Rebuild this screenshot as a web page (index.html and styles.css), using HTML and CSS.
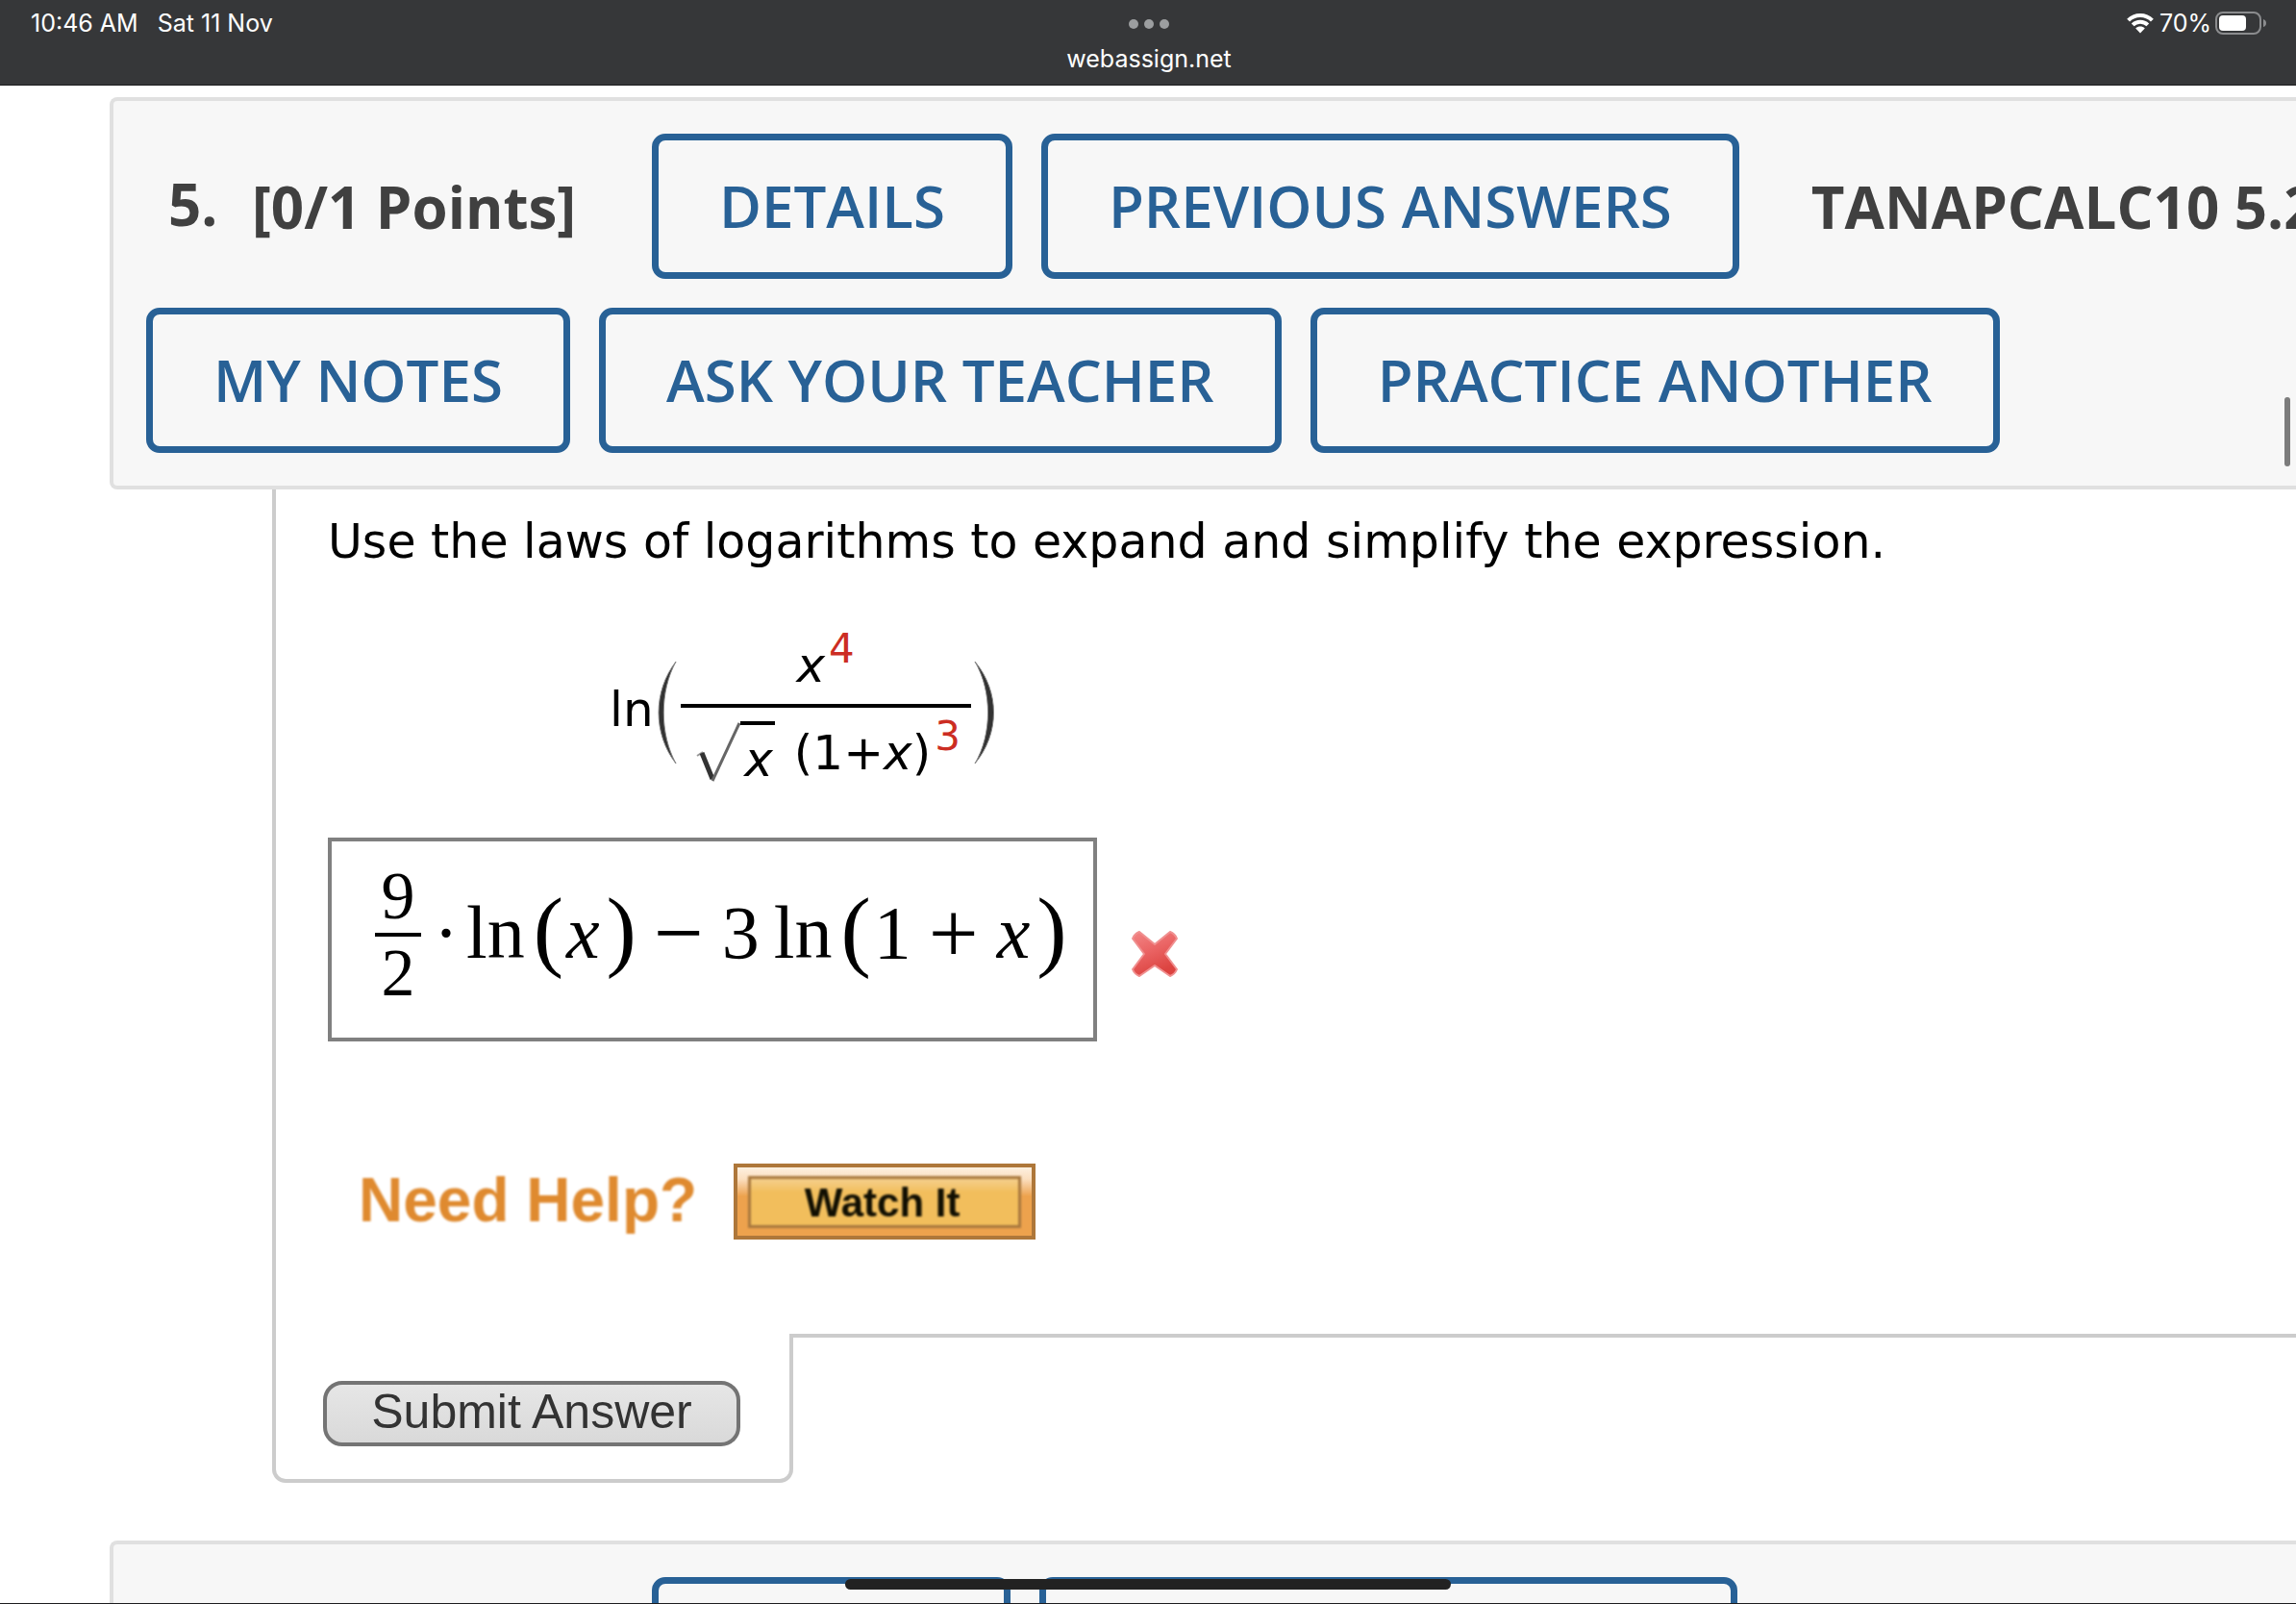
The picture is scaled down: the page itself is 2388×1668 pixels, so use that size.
FILE: index.html
```html
<!DOCTYPE html>
<html lang="en">
<head>
<meta charset="utf-8">
<meta name="viewport" content="width=device-width, initial-scale=1">
<title>webassign.net</title>
<link rel="stylesheet" href="styles.css">
</head>
<body>
<header class="status-bar">
  <div class="status-left"><span>10:46 AM</span><span>Sat 11 Nov</span></div>
  <div class="status-center">
    <div class="dots"><i></i><i></i><i></i></div>
    <div class="address">webassign.net</div>
  </div>
  <div class="status-right">
    <svg class="wifi" viewBox="0 0 28 22" width="28" height="22" aria-label="Wi-Fi">
      <g fill="none" stroke="#fff" stroke-width="4">
        <path d="M1.6 8.2C8.4 1.200 19.600 1.200 26.400 8.200"/>
        <path d="M6.200 12.900C10.500 8.700 17.500 8.700 21.800 12.900"/>
      </g>
      <path d="M9.200 16.400C12 13.900 16 13.900 18.800 16.400L14 21.400Z" fill="#fff"/>
    </svg>
    <span>70%</span>
    <svg class="battery" viewBox="0 0 54 24" width="54" height="24" aria-label="Battery">
      <rect x="1" y="1" width="46" height="22" rx="7" fill="none" stroke="#8b8c8e" stroke-width="2"/>
      <rect x="4" y="4" width="28" height="16" rx="4" fill="#fff"/>
      <path d="M50 8q3 1 3 4t-3 4z" fill="#8b8c8e"/>
    </svg>
  </div>
</header>

<main class="page">
  <section class="question">
    <div class="question-header">
      <div class="header-row">
        <h2 class="number">5.</h2>
        <span class="points">[0/1 Points]</span>
        <button class="action" type="button">DETAILS</button>
        <button class="action" type="button">PREVIOUS ANSWERS</button>
        <span class="source">TANAPCALC10 5.2</span>
      </div>
      <div class="header-row">
        <button class="action" type="button">MY NOTES</button>
        <button class="action" type="button">ASK YOUR TEACHER</button>
        <button class="action" type="button">PRACTICE ANOTHER</button>
      </div>
    </div>

    <div class="question-body">
      <p class="prompt">Use the laws of logarithms to expand and simplify the expression.</p>

      <div class="formula">
        <span class="fn">ln</span>
        <svg class="fence" viewBox="0 0 28 108" width="28" height="108" aria-hidden="true"><path d="M23 1C-1 32-1 76 23 107C6 76 6 32 23 1Z" fill="#333" stroke="#888" stroke-width="1"/></svg>
        <div class="frac">
          <div class="numerator"><i>x</i><sup>4</sup></div>
          <div class="denominator">
            <span class="radical">
              <svg viewBox="0 0 46 64" width="46" height="64" aria-hidden="true"><path d="M1 36L7 32" stroke="#999" stroke-width="2" fill="none"/><path d="M6 33L17 60" stroke="#333" stroke-width="5" fill="none"/><path d="M17 62L45 2" stroke="#666" stroke-width="3" fill="none"/></svg>
              <i class="radicand">x</i>
            </span>
            <span class="power">(1+<i>x</i>)<sup>3</sup></span>
          </div>
        </div>
        <svg class="fence" viewBox="0 0 28 108" width="28" height="108" aria-hidden="true"><path d="M4 1C30 32 30 76 4 107C22 76 22 32 4 1Z" fill="#333" stroke="#888" stroke-width="1"/></svg>
      </div>

      <div class="answer-row">
        <div class="answer">
          <div class="ratio"><span>9</span><span>2</span></div>
          <div class="terms">
            <span class="dot">·</span><span>ln</span><span class="open">(</span><i>x</i><span class="close">)</span><span class="op">−</span><span>3</span><span class="coef">ln</span><span class="open">(</span><span>1</span><span class="op">+</span><i>x</i><span class="close">)</span>
          </div>
        </div>
        <svg class="wrong" viewBox="0 0 50 50" width="50" height="50" role="img" aria-label="Incorrect">
          <defs><linearGradient id="red" x1="0" y1="0" x2="0.4" y2="1"><stop offset="0" stop-color="#f28585"/><stop offset="0.5" stop-color="#ea6464"/><stop offset="1" stop-color="#dc4340"/></linearGradient></defs>
          <path d="M9 2L25 15L41 2Q46 4 48 9L36 25L48 41Q46 46 41 48L25 37L9 48Q4 46 2 41L14 25L2 9Q4 4 9 2Z" fill="url(#red)" stroke="#f09090" stroke-width="2" stroke-linejoin="round"/>
        </svg>
      </div>

      <div class="help">
        <strong class="help-title">Need Help?</strong>
        <button class="watch" type="button"><span>Watch It</span></button>
      </div>
    </div>

    <div class="question-footer">
      <div class="submit-panel"><button class="submit" type="button">Submit Answer</button></div>
      <div class="rule"></div>
    </div>
  </section>

  <section class="question">
    <div class="question-header">
      <div class="header-row">
        <span class="number"></span>
        <span class="points"></span>
        <button class="action details" type="button" aria-label="Details"></button>
        <button class="action previous" type="button" aria-label="Previous answers"></button>
      </div>
    </div>
  </section>
</main>

<div class="scroll-thumb"></div>
<div class="home-indicator"></div>
</body>
</html>
```
FILE: styles.css
```css
* { box-sizing: border-box; }
html { overflow: hidden; }
body {
  position: relative;
  display: flex;
  flex-direction: column;
  height: 100vh;
  margin: 0;
  overflow: hidden;
  background: #fff;
  border-bottom: 1px solid #1c1c1e;
}
button { margin: 0; cursor: pointer; }

/* status bar */
.status-bar {
  display: grid;
  flex: none;
  grid-template-columns: 1fr auto 1fr;
  height: 89px;
  padding: 8px 30px 0 32px;
  background: #363739;
  border-bottom: 1px solid #1c1c1e;
  color: #fff;
  font: 25px/32px Inter, sans-serif;
}
.status-left { display: flex; gap: 20px; }
.status-center { display: flex; flex-direction: column; align-items: center; }
.dots { display: flex; gap: 6px; padding: 12px 0; }
.dots i { width: 10px; height: 10px; border-radius: 50%; background: #9c9ea0; }
.address { margin-top: 3px; }
.status-right { display: flex; justify-content: flex-end; align-items: flex-start; }
.wifi { margin: 5px 6px 0 0; }
.battery { margin: 4px 0 0 4px; }

/* question header */
.page {
  flex: 1;
  min-height: 0;
  padding: 12px 0 0 114px;
  overflow: hidden;
}
.question-header {
  display: flex;
  flex-direction: column;
  gap: 30px;
  padding: 34px 0 34px 34px;
  background: #f7f7f7;
  border: 4px solid #e0e0e0;
  border-right: 0;
  border-radius: 8px 0 0 8px;
  color: #404040;
  font: 700 60px/84px "Open Sans", sans-serif;
}
.header-row { display: flex; align-items: center; gap: 30px; white-space: nowrap; }
.header-row > * { flex-shrink: 0; }
.number {
  width: 80px;
  margin: 0;
  padding: 0 0 6px 23px;
  font: inherit;
}
.points { width: 386px; }
.source { margin-left: 45px; }
.action {
  height: 151px;
  padding: 0 63px 2px;
  background: transparent;
  border: 7px solid #286196;
  border-radius: 14px;
  color: #286196;
  font: 600 60px/84px "Open Sans", sans-serif;
}
.details { width: 373px; }
.previous { width: 726px; }

/* question body */
.question-body {
  margin-left: 169px;
  padding: 25px 0 98px 54px;
  border-left: 4px solid #ccc;
  color: #000;
  font: 50px/60px "DejaVu Sans", sans-serif;
}
.prompt { margin: 0; font-size: 49px; white-space: nowrap; }

.formula {
  display: flex;
  align-items: center;
  margin: 68px 0 51px 293px;
}
.fn { margin-bottom: 6px; }
.frac { width: 302px; }
.fence { display: block; }
.numerator { padding-bottom: 10px; border-bottom: 4px solid #000; text-align: center; }
.denominator { display: flex; justify-content: center; gap: 20px; padding: 14px 0 0 6px; }
.formula sup {
  margin-left: 4px;
  color: #cc2d23;
  font-size: 42px;
  line-height: 0;
  vertical-align: 20px;
}
.radical { display: flex; align-items: flex-start; }
.radical svg { display: block; }
.radicand { padding: 6px 2px 0 4px; border-top: 4px solid #000; }
.power { padding-top: 3px; }

/* answer */
.answer-row { display: flex; align-items: center; gap: 35px; }
.answer {
  display: flex;
  align-items: center;
  padding: 27px 27px 37px 45px;
  border: 4px solid #808080;
  font: 78px/86px "Liberation Serif", serif;
}
.ratio { width: 48px; font-size: 70px; line-height: 60px; text-align: center; }
.ratio span { display: block; }
.ratio span:first-child { padding-bottom: 8px; border-bottom: 4px solid #000; }
.ratio span:last-child { padding-top: 8px; }
.terms { display: flex; align-items: center; margin-bottom: 4px; }
.dot { margin: 0 8px 0 13px; }
.open, .close { padding-bottom: 8px; font-size: 94px; }
.open { margin: 0 3px 0 9px; }
.close { margin-left: 7px; }
.op { margin: 0 19px 0 18px; font-size: 92px; }
.coef { margin-left: 15px; }
.wrong { margin-top: 29px; }

/* help */
.help { display: flex; gap: 38px; margin: 127px 0 0 32px; }
.help-title {
  color: #df8a2f;
  font: 700 64px/76px "Liberation Sans", sans-serif;
  filter: blur(1px);
}
.watch {
  height: 79px;
  width: 314px;
  padding: 8px 11px;
  background: linear-gradient(#fdf0df, #fbdfc0 12px, #eda24d 30px);
  border: 4px solid #ae773a;
  color: #110f02;
  font: 700 42px/50px "Liberation Sans", sans-serif;
}
.watch span {
  display: block;
  height: 54px;
  padding-right: 5px;
  background: linear-gradient(#f5cf8c, #f2be5c 14px);
  border: 3px solid #a8783e;
  filter: blur(1px);
}

/* footer */
.question-footer { display: flex; margin: 0 0 60px 169px; }
.submit-panel {
  padding: 49px 51px 34px 49px;
  border: solid #ccc;
  border-width: 0 4px 4px;
  border-radius: 0 0 14px 14px;
}
.submit {
  display: block;
  width: 434px;
  height: 68px;
  padding: 0 0 4px;
  background: linear-gradient(#e6e6e6, #d9d9d9);
  border: 4px solid #747474;
  border-radius: 20px;
  color: #333;
  font: 50px/56px "Liberation Sans", sans-serif;
}
.rule { flex: 1; border-top: 4px solid #ccc; }

/* overlays */
.scroll-thumb {
  position: absolute;
  top: 413px;
  right: 6px;
  width: 6px;
  height: 72px;
  border-radius: 3px;
  background: #7c7c7c;
}
.home-indicator {
  position: absolute;
  bottom: 14px;
  left: 50%;
  width: 630px;
  height: 11px;
  margin-left: -315px;
  border-radius: 6px;
  background: #222;
}
```
